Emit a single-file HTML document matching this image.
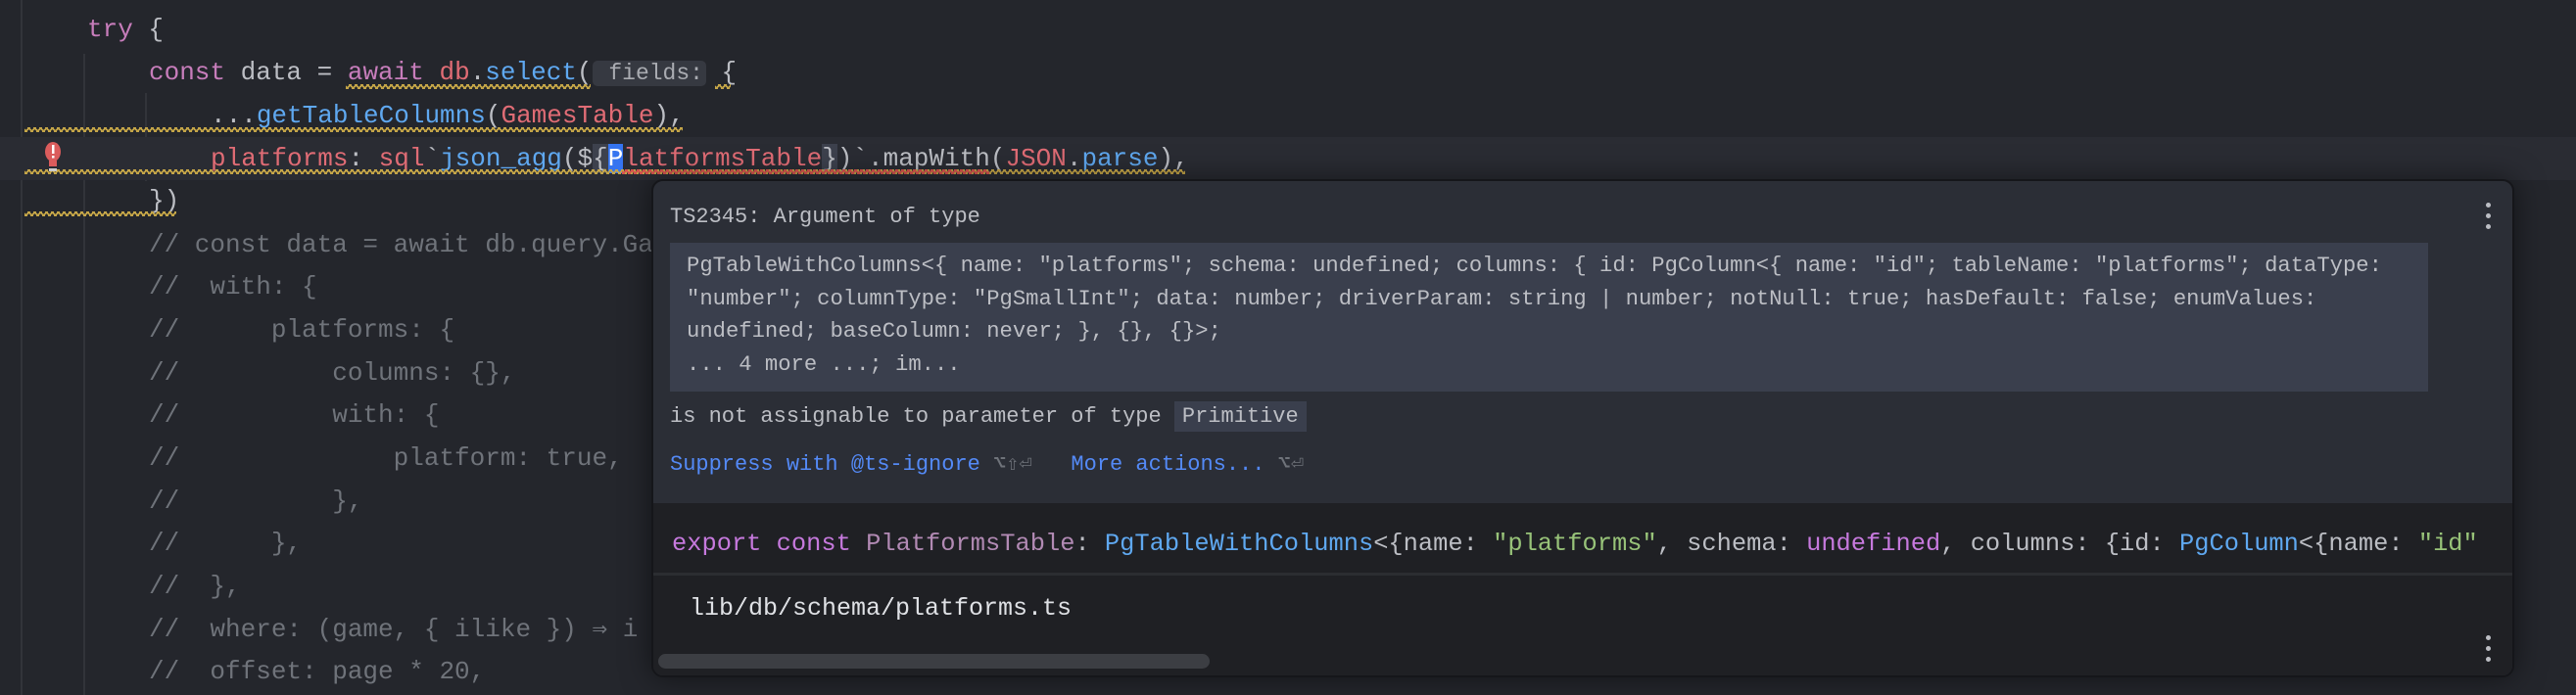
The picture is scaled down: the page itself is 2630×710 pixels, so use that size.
<!DOCTYPE html>
<html><head><meta charset="utf-8"><style>
html,body{margin:0;padding:0}
body{width:2630px;height:710px;background:#24262c;position:relative;overflow:hidden;font-family:"Liberation Mono",monospace;}
.l{position:absolute;left:0;height:44px;line-height:44px;font-size:26px;white-space:pre;color:#bcbec4}
.kw{color:#c77dbb}.rd{color:#e06c75}.bl{color:#5fa8f0}.cm{color:#6f737a}.gr{color:#98c379}.pu{color:#c679dd}
.sq{position:absolute;height:5px;background-image:linear-gradient(135deg,transparent 40%,#c4a548 40%,#c4a548 60%,transparent 60%),linear-gradient(45deg,transparent 40%,#c4a548 40%,#c4a548 60%,transparent 60%);background-size:6px 5px;background-position:0 0,3px 0;}
.sqr{background-image:linear-gradient(135deg,transparent 40%,#d9534f 40%,#d9534f 60%,transparent 60%),linear-gradient(45deg,transparent 40%,#d9534f 40%,#d9534f 60%,transparent 60%);}
.guide{position:absolute;width:2px;background:#32343a}
.pop{position:absolute;left:665px;top:183px;width:1898px;height:505px;border-radius:12px;background:#2b2e36;border:2px solid #15161a;overflow:hidden;box-shadow:0 0 30px rgba(0,0,0,.5)}
.p{position:absolute;white-space:pre;font-size:22px;color:#bcbec4}
.dots{position:absolute;width:5px;}
.dots i{display:block;width:5px;height:5px;border-radius:50%;background:#bcbec4;margin-bottom:6px}
</style></head><body>
<div class="guide" style="left:21px;top:0;height:710px"></div>
<div class="guide" style="left:85px;top:55px;height:655px"></div>
<div class="guide" style="left:148px;top:95px;height:90px"></div>
<div style="position:absolute;left:0;top:140px;width:2630px;height:44px;background:#2a2c33"></div>

<div class="l" style="top:8px;left:89px"><span class="kw">try</span> {</div>
<div class="l" style="top:52px;left:152px"><span class="kw">const</span> data = <span class="kw">await</span> <span class="rd">db</span>.<span class="bl">select</span>(<span style="background:#363941;color:#a9abb1;border-radius:5px;padding:0 3px;font-size:23px"> fields:</span> {</div>
<div class="l" style="top:96px;left:215px">...<span class="bl">getTableColumns</span>(<span class="rd">GamesTable</span>),</div>
<div class="l" style="top:140px;left:215px"><span class="rd">platforms</span>: <span class="rd">sql</span>`<span class="bl">json_agg</span>($<span style="background:#3d414d">{</span><span style="background:#3574f0;color:#fff">P</span><span class="rd">latformsTable</span><span style="background:#3d414d">}</span>)`.mapWith(<span class="rd">JSON</span>.<span class="bl">parse</span>),</div>
<div class="l" style="top:183px;left:152px">})</div>
<div class="l cm" style="top:228px;left:152px">// const data = await db.query.Ga</div>
<div class="l cm" style="top:271px;left:152px">//  with: {</div>
<div class="l cm" style="top:315px;left:152px">//      platforms: {</div>
<div class="l cm" style="top:359px;left:152px">//          columns: {},</div>
<div class="l cm" style="top:402px;left:152px">//          with: {</div>
<div class="l cm" style="top:446px;left:152px">//              platform: true,</div>
<div class="l cm" style="top:490px;left:152px">//          },</div>
<div class="l cm" style="top:533px;left:152px">//      },</div>
<div class="l cm" style="top:577px;left:152px">//  },</div>
<div class="l cm" style="top:621px;left:152px">//  where: (game, { ilike }) ⇒ i</div>
<div class="l cm" style="top:664px;left:152px">//  offset: page * 20,</div>

<div class="sq" style="left:353px;top:86px;width:250px"></div>
<div class="sq" style="left:730px;top:86px;width:16px"></div>
<div class="sq" style="left:25px;top:130px;width:672px"></div>
<div class="sq" style="left:25px;top:173px;width:1185px"></div>
<div class="sq sqr" style="left:635px;top:173px;width:375px"></div>
<div class="sq" style="left:25px;top:216px;width:155px"></div>

<svg style="position:absolute;left:44px;top:144px" width="20" height="34" viewBox="0 0 20 34"><ellipse cx="10" cy="11" rx="8" ry="10" fill="#db5c5c"/><rect x="6" y="20" width="8" height="6" fill="#db5c5c"/><rect x="6" y="28" width="8" height="3" fill="#ccc"/><rect x="9" y="4" width="2.5" height="9" fill="#fff"/><rect x="9" y="15" width="2.5" height="2.5" fill="#fff"/></svg>

<div class="pop">
<div class="p" style="left:17px;top:22px;line-height:30px">TS2345: Argument of type</div>
<div class="dots" style="left:1871px;top:22px"><i></i><i></i><i></i></div>
<div style="position:absolute;left:17px;top:63px;width:1795px;height:152px;background:#3a3f4d"></div>
<div class="p" style="left:34px;top:70px;line-height:33.5px;font-size:22.2px">PgTableWithColumns&lt;{ name: "platforms"; schema: undefined; columns: { id: PgColumn&lt;{ name: "id"; tableName: "platforms"; dataType:
"number"; columnType: "PgSmallInt"; data: number; driverParam: string | number; notNull: true; hasDefault: false; enumValues:
undefined; baseColumn: never; }, {}, {}&gt;;
... 4 more ...; im...</div>
<div class="p" style="left:17px;top:224px;line-height:34px">is not assignable to parameter of type <span style="background:#3a3f4d;padding:3px 8px">Primitive</span></div>
<div class="p" style="left:17px;top:275px;line-height:30px;color:#548af7">Suppress with @ts-ignore <span style="color:#6f737a">⌥⇧⏎</span>   More actions... <span style="color:#6f737a">⌥⏎</span></div>
<div style="position:absolute;left:0;top:329px;width:1898px;height:176px;background:#1f2024"></div>
<div style="position:absolute;left:0;top:400px;width:1898px;height:3px;background:#2b2d31"></div>
<div class="p" style="left:19px;top:353px;line-height:36px;font-size:25.4px"><span class="pu">export</span> <span class="pu">const</span> <span style="color:#b28ab4">PlatformsTable</span>: <span class="bl">PgTableWithColumns</span>&lt;{name: <span class="gr">"platforms"</span>, schema: <span class="pu">undefined</span>, columns: {id: <span class="bl">PgColumn</span>&lt;{name: <span class="gr">"id"</span></div>
<div class="p" style="left:37px;top:420px;line-height:34px;font-size:25px;color:#dfe1e5">lib/db/schema/platforms.ts</div>
<div style="position:absolute;left:5px;top:483px;width:563px;height:15px;border-radius:8px;background:#3c3e43"></div>
<div class="dots" style="left:1871px;top:464px"><i></i><i></i><i></i></div>
</div>
</body></html>
